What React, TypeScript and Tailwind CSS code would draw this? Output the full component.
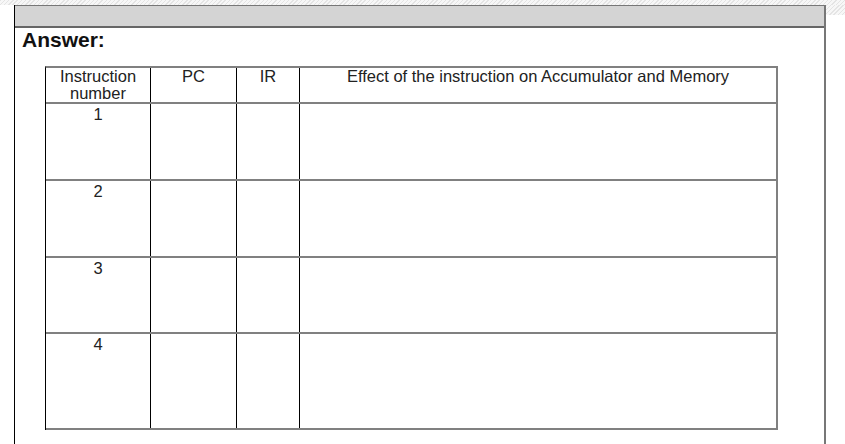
export default function App() {
  const rows = [
    { n: '1', h: 'h-[77px]' },
    { n: '2', h: 'h-[77px]' },
    { n: '3', h: 'h-[76px]' },
    { n: '4', h: 'h-[96px]' },
  ]

  return (
    <div className="w-[845px] h-[444px] bg-white overflow-hidden font-['Liberation_Sans',Arial,sans-serif] text-[#222]">
      {/* hatched strip above the frame */}
      <div className="h-[5px] bg-[repeating-linear-gradient(135deg,#e4e4e4_0px,#e4e4e4_1px,#f7f7f7_1px,#f7f7f7_3px)]" />

      <div className="flex">
        <div className="ml-[14px] w-[812px] h-[439px] border-l border-l-black border-r-2 border-r-[#777]">
          <div className="h-[23px] bg-[#d4d4d4] border-t border-t-[#777] border-b-2 border-b-[#666]" />

          <div className="pl-[7px] text-[21px] font-bold leading-[24px] text-[#111]">Answer:</div>

          <div className="ml-[30px] mt-[14px] w-[733px] border-l border-l-black border-t-2 border-t-[#808080] border-r-2 border-r-[#808080]">
            {/* header row */}
            <div className="flex h-[36px] border-b-2 border-b-[#808080] text-[16.5px] leading-[17px]">
              <div className="w-[105px] border-r border-r-black text-center">
                Instruction<br />number
              </div>
              <div className="w-[86px] border-r border-r-black text-center">PC</div>
              <div className="w-[63px] border-r border-r-black text-center">IR</div>
              <div className="flex-1 text-center">Effect of the instruction on Accumulator and Memory</div>
            </div>

            {rows.map((r) => (
              <div key={r.n} className={`flex ${r.h} border-b-2 border-b-[#808080] text-[16.5px] leading-[16px]`}>
                <div className="w-[105px] border-r border-r-black text-center pt-[2px]">{r.n}</div>
                <div className="w-[86px] border-r border-r-black" />
                <div className="w-[63px] border-r border-r-black" />
                <div className="flex-1" />
              </div>
            ))}
          </div>
        </div>
        <div className="w-[19px] h-[10px] bg-[repeating-linear-gradient(135deg,#e4e4e4_0px,#e4e4e4_1px,#f7f7f7_1px,#f7f7f7_3px)]" />
      </div>
    </div>
  )
}
